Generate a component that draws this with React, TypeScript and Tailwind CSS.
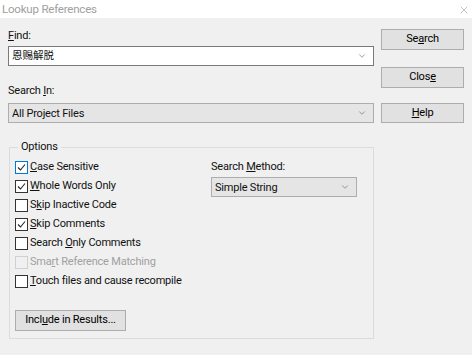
import { ChevronDown, X } from 'lucide-react';
import type { ReactNode } from 'react';

function Combo({ value, white }: { value: ReactNode; white?: boolean }) {
  return (
    <div
      className={`flex h-[20px] items-center justify-between border pl-[3px] pr-[6px] ${
        white ? 'bg-white border-[#7a7a7a]' : 'bg-[#e5e5e5] border-[#adadad]'
      }`}
    >
      <span className="leading-none">{value}</span>
      <ChevronDown size={10} strokeWidth={1.2} className="text-[#444]" />
    </div>
  );
}

function Btn({ children, className = '' }: { children: ReactNode; className?: string }) {
  return (
    <div
      className={`flex items-center justify-center border border-[#adadad] bg-[#e1e1e1] text-[#000] ${className}`}
    >
      {children}
    </div>
  );
}

function Check({
  checked,
  focus,
  disabled,
  children,
}: {
  checked?: boolean;
  focus?: boolean;
  disabled?: boolean;
  children: ReactNode;
}) {
  return (
    <div className={`flex h-[19px] items-center gap-[2px] ${disabled ? 'text-[#a0a0a0]' : ''}`}>
      <div
        className={`flex h-[13px] w-[13px] items-center justify-center border ${
          disabled ? 'border-[#d0d0d0] bg-[#f0f0f0]' : focus ? 'border-[#0078d7] bg-white' : 'border-[#333] bg-white'
        }`}
      >
        {checked && (
          <svg width="9" height="9" viewBox="0 0 9 9">
            <path d="M1 4.5 L3.5 7 L8 1.5" fill="none" stroke="#222" strokeWidth="1.1" />
          </svg>
        )}
      </div>
      <span>{children}</span>
    </div>
  );
}

export default function App() {
  return (
    <div
      className="relative h-[358px] w-[474px] overflow-hidden bg-white text-[11px] tracking-[-0.2px] text-[#111]"
      style={{ fontFamily: 'Roboto, "Noto Sans CJK SC", sans-serif' }}
    >
      {/* Title bar */}
      <div className="flex h-[18px] items-center justify-between pl-[2px] pr-[4px] pt-[1px] text-[#a0a0a0]">
        <span className="text-[11.5px]">Lookup References</span>
        <X size={12} strokeWidth={1} className="text-[#888]" />
      </div>

      {/* Body */}
      <div className="flex h-[337px] w-[472px] bg-[#f0f0f0]">
        {/* Left column */}
        <div className="ml-[8px] w-[366px]">
          <div className="mt-[11px] h-[14px] leading-[14px]">
            <span className="underline">F</span>ind:
          </div>
          <div className="mt-[3px]">
            <Combo white value={<span className="text-[10.5px] tracking-normal">恩赐解脱</span>} />
          </div>
          <div className="mt-[18px] h-[14px] leading-[14px]">
            Search <span className="underline">I</span>n:
          </div>
          <div className="mt-[5px]">
            <Combo value="All Project Files" />
          </div>

          {/* Options group */}
          <fieldset className="mt-[17px] ml-[1px] h-[199px] w-[365px] border border-[#dcdcdc] pl-[5px] pr-[6px]">
            <legend className="ml-[3px] px-[3px] leading-[14px]">Options</legend>
            <div className="flex">
              <div className="mt-[4px] w-[196px]">
                <Check checked focus>
                  <span className="underline">C</span>ase Sensitive
                </Check>
                <Check checked>
                  <span className="underline">W</span>hole Words Only
                </Check>
                <Check>
                  S<span className="underline">k</span>ip Inactive Code
                </Check>
                <Check checked>
                  <span className="underline">S</span>kip Comments
                </Check>
                <Check>
                  Search <span className="underline">O</span>nly Comments
                </Check>
                <Check disabled>
                  Sma<span className="underline">r</span>t Reference Matching
                </Check>
                <Check>
                  <span className="underline">T</span>ouch files and cause recompile
                </Check>
              </div>
              <div className="mt-[3px] w-[146px]">
                <div className="h-[19px] leading-[19px]">
                  Search <span className="underline">M</span>ethod:
                </div>
                <div className="mt-[1px]">
                  <Combo value="Simple String" />
                </div>
              </div>
            </div>
            <Btn className="mt-[19px] h-[21px] w-[111px]">
              <span>
                Incl<span className="underline">u</span>de in Results...
              </span>
            </Btn>
          </fieldset>
        </div>

        {/* Right column buttons */}
        <div className="ml-[7px] flex w-[83px] flex-col">
          <Btn className="mt-[11px] h-[21px]">
            <span>
              Se<span className="underline">a</span>rch
            </span>
          </Btn>
          <Btn className="mt-[17px] h-[21px]">
            <span>
              Clos<span className="underline">e</span>
            </span>
          </Btn>
          <Btn className="mt-[15px] h-[20px]">
            <span>
              <span className="underline">H</span>elp
            </span>
          </Btn>
        </div>
      </div>
    </div>
  );
}
